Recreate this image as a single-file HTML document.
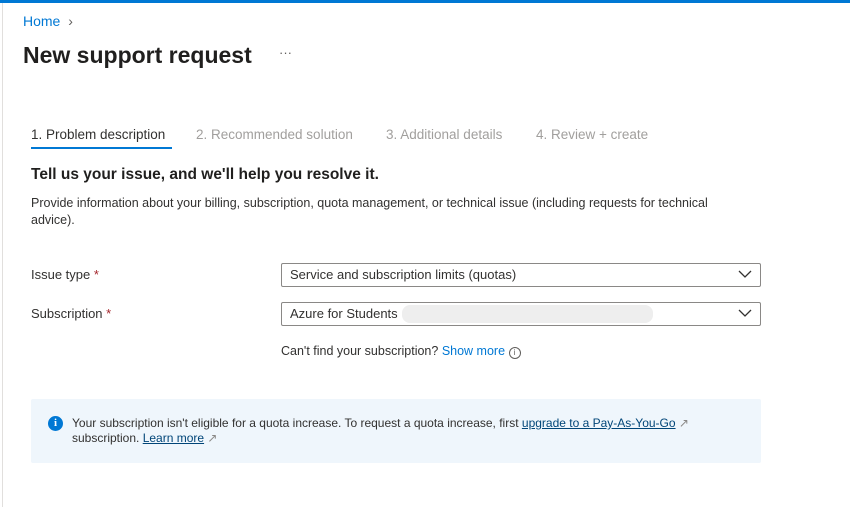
<!DOCTYPE html>
<html><head><style>
body{margin:0;width:850px;height:507px;background:#fff;font-family:"Liberation Sans",sans-serif;color:#323130;position:relative;overflow:hidden}
.a{position:absolute;white-space:nowrap}
.top{left:0;top:0;width:850px;height:3px;background:#0078d4}
.lb{left:2px;top:3px;width:1px;height:504px;background:#e1dfdd}
.sel{position:absolute;left:281px;width:478px;height:22px;border:1px solid #8a8886;border-radius:2px;font-size:13px;line-height:22px;text-indent:8px}
.chev{position:absolute;right:8px;top:5px}
.tab{font-size:13.5px;color:#a19f9d;top:127px}
</style></head><body>
<div class="a top"></div><div class="a lb"></div>
<div class="a" style="left:23px;top:13px;font-size:14px;color:#0078d4">Home <span style="color:#605e5c;margin-left:4px">&#x203A;</span></div>
<div class="a" style="left:23px;top:42px;font-size:23px;font-weight:bold;color:#201f1e">New support request</div>
<div class="a" style="left:279px;top:45px;font-size:13px;color:#605e5c">···</div>
<div class="a tab" style="left:31px;color:#323130">1. Problem description</div>
<div class="a" style="left:31px;top:147px;width:141px;height:2px;background:#0078d4"></div>
<div class="a tab" style="left:196px">2. Recommended solution</div>
<div class="a tab" style="left:386px">3. Additional details</div>
<div class="a tab" style="left:536px">4. Review + create</div>
<div class="a" style="left:31px;top:166px;font-size:15.5px;font-weight:bold;color:#201f1e">Tell us your issue, and we'll help you resolve it.</div>
<div class="a" style="left:31px;top:195px;font-size:12.5px;line-height:17px;white-space:normal;width:720px">Provide information about your billing, subscription, quota management, or technical issue (including requests for technical advice).</div>
<div class="a" style="left:31px;top:267px;font-size:13px">Issue type <span style="color:#a4262c">*</span></div>
<div class="a" style="left:31px;top:306px;font-size:13px">Subscription <span style="color:#a4262c">*</span></div>
<div class="sel" style="top:263px">Service and subscription limits (quotas)<svg class="chev" width="14" height="10"><path d="M1 2l6 6 6-6" fill="none" stroke="#323130" stroke-width="1.3"/></svg></div>
<div class="sel" style="top:302px">Azure for Students<div class="a" style="left:120px;top:2px;width:251px;height:18px;background:#eeeeee;border-radius:8px"></div><svg class="chev" width="14" height="10"><path d="M1 2l6 6 6-6" fill="none" stroke="#323130" stroke-width="1.3"/></svg></div>
<div class="a" style="left:281px;top:344px;font-size:12.5px">Can't find your subscription? <span style="color:#0078d4">Show more</span> <span style="display:inline-block;width:10px;height:10px;border:1px solid #605e5c;border-radius:50%;font-size:8px;line-height:10px;text-align:center;color:#605e5c">i</span></div>
<div class="a" style="left:31px;top:399px;width:730px;height:64px;background:#eff6fc;border-radius:2px"></div>
<div class="a" style="left:48px;top:416px;width:15px;height:15px;border-radius:50%;background:#0078d4;color:#fff;font-size:11px;font-weight:bold;text-align:center;line-height:15px;font-family:'Liberation Serif',serif">i</div>
<div class="a" style="left:72px;top:416px;font-size:12px;line-height:15px">Your subscription isn't eligible for a quota increase. To request a quota increase, first <span style="text-decoration:underline;color:#004578">upgrade to a Pay-As-You-Go</span> <span style="color:#8a8886">&#x2197;</span><br>subscription. <span style="text-decoration:underline;color:#004578">Learn more</span> <span style="color:#8a8886">&#x2197;</span></div>
</body></html>
